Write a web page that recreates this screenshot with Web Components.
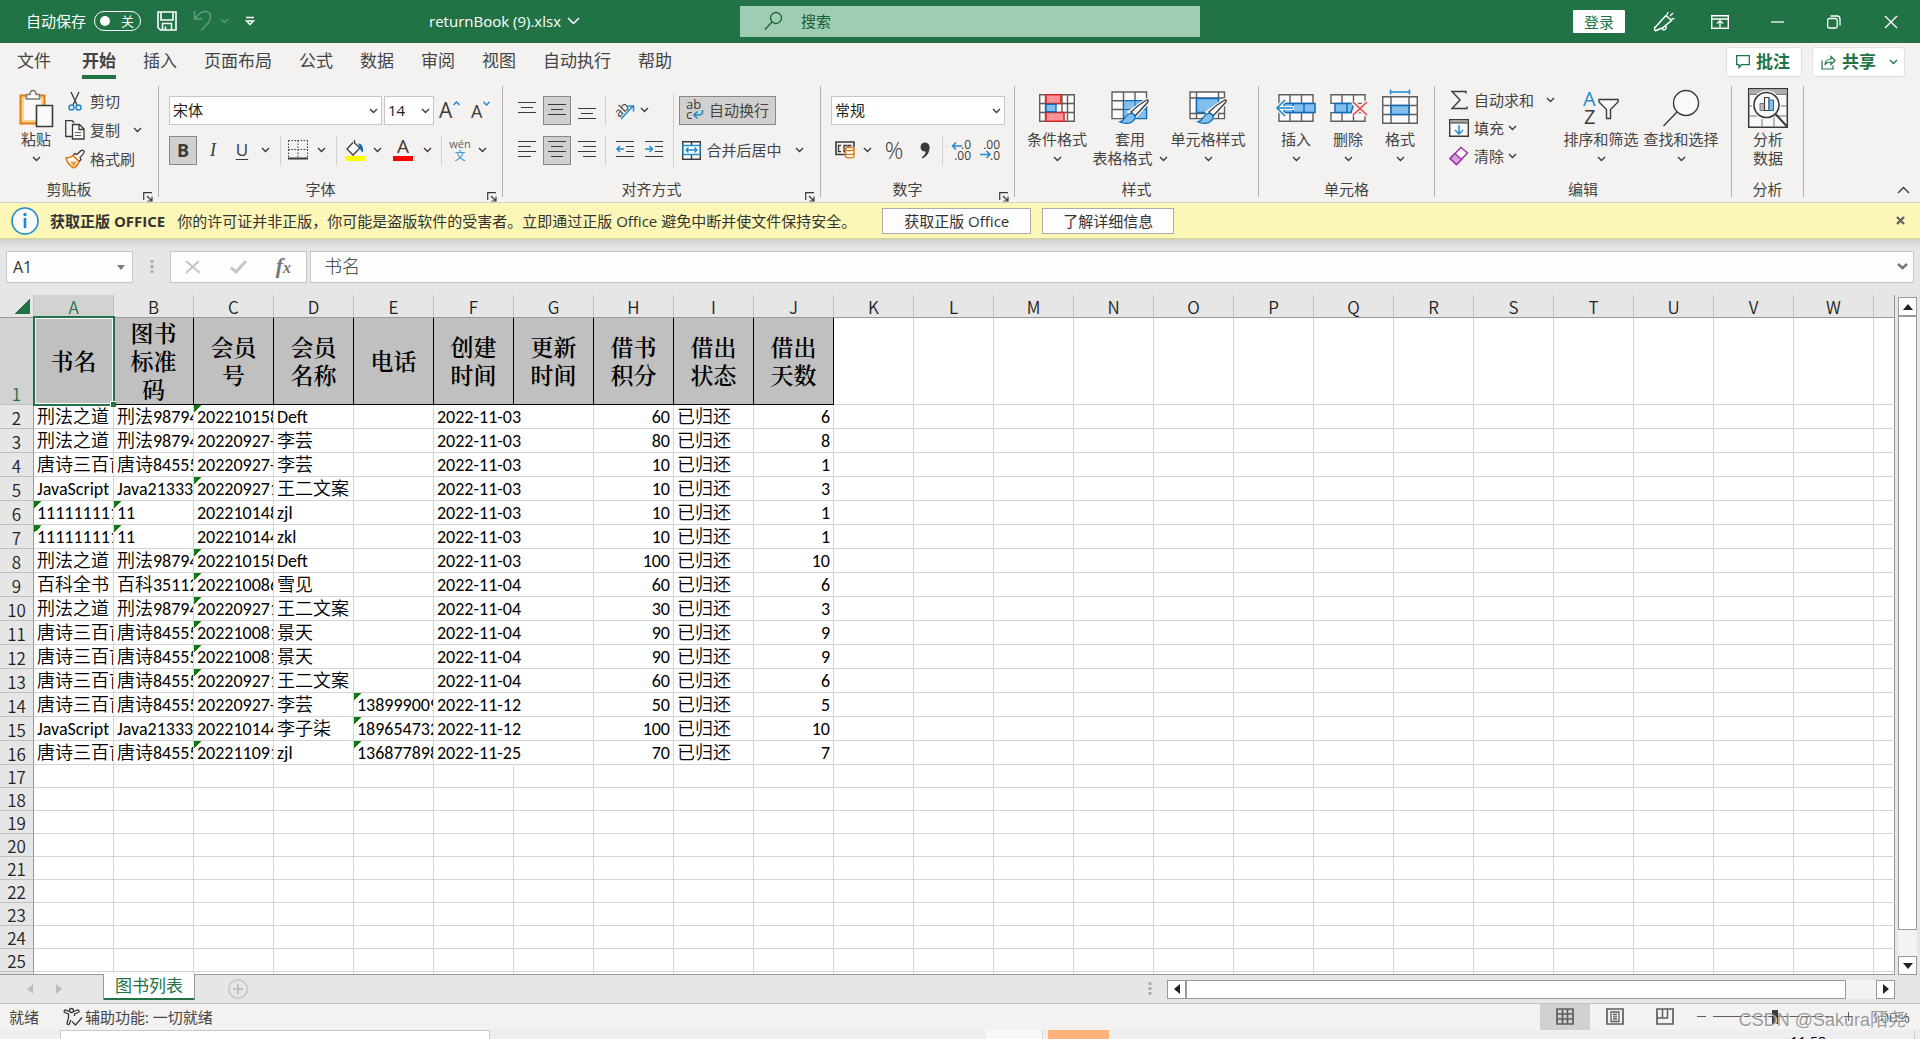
<!DOCTYPE html>
<html lang="zh-CN">
<head>
<meta charset="utf-8">
<title>returnBook (9).xlsx - Excel</title>
<style>
html,body{margin:0;height:100%}
body{font:15px/20px "Open Sans","Noto Sans CJK SC",sans-serif;color:#444;background:#e6e6e6;overflow:hidden}
</style>
</head>
<body>
<excel-app></excel-app>
<script>
const K='#3b3a39', G='#5f5e5c', B='#1e8bcd', D='#0f6cbd', L='#83beec';
const lines=(a)=>a.map(([x,y,w])=>`<path d="M${x} ${y}.5h${w}" stroke="${K}"/>`).join('');
const brush=`<path d="M37 9.500C39 8 40 9.500 38.500 11.500L26 25l-5-4z" fill="#fafafa" stroke="#f3f2f1" stroke-width="4"/><path d="M37 9.500C39 8 40 9.500 38.500 11.500L26 25l-4-4Q29 14 37 9.500z" fill="#fafafa" stroke="${K}" stroke-width="1.300"/><path d="M20 23c4-2 8 2 5 6-3 4-9 4-14 2 5-1 4-6 9-8z" fill="${L}" stroke="${D}" stroke-width="1.300"/>`;
const ICONS={
chev:[9,6,`<path d="M1 1l3.500 3.500L8 1" stroke="${K}" stroke-width="1.400"/>`],
chevw:[13,8,`<path d="M1 1l5.500 5.500L12 1" stroke="#fff" stroke-width="1.500"/>`],
chevdim:[9,6,`<path d="M1 1l3.500 3.500L8 1" stroke="#5f9a7a" stroke-width="1.300"/>`],
chevg:[9,6,`<path d="M1 1l3.500 3.500L8 1" stroke="#217346" stroke-width="1.300"/>`],
chevbold:[11,7,`<path d="M1 1l4.500 4L10 1" stroke="#777" stroke-width="2.500"/>`],
up:[13,8,`<path d="M1 7l5.500-5.500L12 7" stroke="${K}" stroke-width="1.400"/>`],
save:[20,20,`<path d="M1 1h18v18H3.500L1 16.500zM4 1v8h12V1M5.500 19v-6.500h9V19M8.500 19v-3.500" stroke="#fff" stroke-width="1.600"/>`],
undo:[19,21,`<path d="M1.500 1v8h8M1.500 9C6 3 10 1 13.500 1.500c5 1 5 7 2 11L8 20.500" stroke="#5f9a7a" stroke-width="1.600"/>`],
custom:[10,10,`<path d="M1 1.500h8M1.500 5L5 8.500 8.500 5z" stroke="#fff" stroke-width="1.400"/>`],
search:[19,20,`<circle cx="12" cy="7" r="5.500" stroke="#185c37" stroke-width="1.300"/><path d="M8 11L1 18.500" stroke="#185c37" stroke-width="1.300"/>`],
pen:[22,22,`<path d="M2 20L1.500 17 13 4.500l5.500 5L9 17.500c1 1.500 3 2 4 0V15M2 20l7-3" stroke="#fff" stroke-width="1.500"/><path d="M14 4l1-3M17 5l3-3M18.500 8l3-.5" stroke="#fff" stroke-width="1.300"/>`],
ribbonopt:[18,14,`<path d="M.7.700h16.600v12.600H.7zM1 4h16M9 12V6M6 8.500L9 5.800l3 2.700" stroke="#fff" stroke-width="1.400"/>`],
min:[13,2,`<path d="M0 1h13" stroke="#fff" stroke-width="1.300"/>`],
restore:[14,14,`<rect x=".7" y="3.500" width="9.500" height="9.500" rx="1.500" stroke="#fff" stroke-width="1.300"/><path d="M3.500 1H10q3 0 3 3v6.500" stroke="#fff" stroke-width="1.300"/>`],
close:[14,14,`<path d="M1 1l12 12M13 1L1 13" stroke="#fff" stroke-width="1.400"/>`],
x:[9,9,`<path d="M1 1l7 7M8 1L1 8" stroke="#666" stroke-width="2.400"/>`],
comment:[14,14,`<path d="M.7.700h12.600v9H5.500L3 12.500V9.700H.7z" stroke="#217346" stroke-width="1.300"/>`],
share:[15,15,`<path d="M1 5.500V14h11v-3.500M4 10c0-4 3-6 6-6V1.500L14 5.500l-4 4V7C7 7 5 8 4 10z" stroke="#217346" stroke-width="1.200"/>`],
launch:[10,10,`<path d="M.7 8V.7H9M4 4l5 5M9 4.500V9H4.500" stroke="${K}" stroke-width="1.200"/>`],
paste:[36,40,`<path d="M2.500 7.500h24v28h-24z" fill="#fbd28b" stroke="#e07a12" stroke-width="2"/><path d="M6 11h17v21H6z" fill="#fafafa"/><path d="M8.500 11V6.500h3.500C12 1 18 1 18 6.500h3.500V11z" fill="#fafafa" stroke="#7a7a78" stroke-width="1.500"/><path d="M18.500 17.500h16v21h-16z" fill="#fafafa" stroke="${K}" stroke-width="1.600"/>`],
cut:[14,20,`<path d="M3 1l6 13M11 1L5 14" stroke="${K}" stroke-width="1.300"/><circle cx="3.500" cy="16.500" r="2.500" stroke="${B}" stroke-width="1.500"/><circle cx="10.500" cy="16.500" r="2.500" stroke="${B}" stroke-width="1.500"/>`],
copy:[20,20,`<path d="M7 16.500H.7V.7h6.500l2 2" stroke="${K}" stroke-width="1.300"/><path d="M7.500 4.500h7l4.500 4.500v10H7.500zM14 5v4.500h5" fill="#fafafa" stroke="${K}" stroke-width="1.300"/><path d="M10 12.500h6M10 15.500h6" stroke="${G}"/>`],
painter:[20,20,`<path d="M18.500 1.500c-1.500-1-2.500 0-6.500 4l-2-1-2 2 6 6 2-2-1-2c4-4 5-5.500 3.500-7z" fill="#fafafa" stroke="${K}" stroke-width="1.300"/><path d="M8 6.500C6 8.500 4 9 1 9c1 4 4 8 8 10 3-2 4.500-4 5-6.500z" fill="#fff" stroke="#e07a12" stroke-width="1.500"/><path d="M5 13l7-1-3 6z" fill="#f0a04b"/>`],
grow:[20,20,`<text x="-1" y="18" font-size="21" fill="${K}" font-family="Open Sans">A</text><path d="M13.500 5l3-3 3 3" stroke="${B}" stroke-width="1.500"/>`],
shrink:[18,20,`<text x="-1" y="18" font-size="18" fill="${K}" font-family="Open Sans">A</text><path d="M11.500 2l3 3 3-3" stroke="${B}" stroke-width="1.500"/>`],
border:[20,20,`<path d="M.5 .500h19M.5 .500v17M19.500 .500v17M10 .500v17M.5 9.500h19" stroke="${K}" stroke-dasharray="1.500 1.500"/><path d="M0 18.500h20" stroke="${K}" stroke-width="2"/>`],
fill:[20,22,`<path d="M8 3.500L2 10l6 6 7-7-5.500-5V1" fill="#fafafa" stroke="${K}" stroke-width="1.300"/><path d="M13 4.500c4 0 5.500 3 5 9-2-1-3-3-3-5z" fill="${D}"/><path d="M0 17h20v5H0z" fill="#ff0"/>`],
fcolor:[20,22,`<text x="10" y="14" text-anchor="middle" font-size="19" fill="${K}" font-family="Open Sans">A</text><path d="M0 17h20v5H0z" fill="#f00"/>`],
wen:[22,22,`<text x="11" y="9" text-anchor="middle" font-size="11" fill="${G}" font-family="Open Sans">wén</text><text x="11" y="21" text-anchor="middle" font-size="11" fill="${B}" font-family="Noto Sans CJK SC">文</text>`],
at:[18,20,lines([[0,2,18],[3,7,12],[0,12,18]])],
am:[18,20,lines([[0,4,18],[3,9,12],[0,14,18]])],
ab:[18,20,lines([[0,8,18],[3,13,12],[0,18,18]])],
al:[18,20,lines([[0,1,18],[0,6,13],[0,11,18],[0,16,13]])],
ac:[18,20,lines([[0,1,18],[3,6,12],[0,11,18],[3,16,12]])],
ar:[18,20,lines([[0,1,18],[5,6,13],[0,11,18],[5,16,13]])],
orient:[22,22,`<text x="1" y="15" font-size="13" fill="${K}" font-family="Open Sans" transform="rotate(-45 8 12)">ab</text><path d="M7 20L19 7M14 7h5.500v5.500" stroke="${B}" stroke-width="1.500"/>`],
outdent:[18,20,lines([[0,1,18],[10,6,8],[10,11,8],[0,16,18]])+`<path d="M8 9H1.500M4 6L1 9l3 3" stroke="${B}" stroke-width="1.500"/>`],
indent:[18,20,lines([[0,1,18],[10,6,8],[10,11,8],[0,16,18]])+`<path d="M0 9h7M4.500 6l3 3-3 3" stroke="${B}" stroke-width="1.500"/>`],
wrap:[18,20,`<text x="0" y="9" font-size="13" fill="${K}" font-family="Open Sans">ab</text><text x="0" y="19" font-size="13" fill="${K}" font-family="Open Sans">c</text><path d="M16.500 10v2q0 3-4 3H8.500M11.500 11.500L8 15l3.500 3.500" stroke="${B}" stroke-width="1.600"/>`],
merge:[19,19,`<path d="M.7.700h17.600v17.600H.7zM9.500 1v4M9.500 14v4" fill="#fafafa" stroke="${K}" stroke-width="1.400"/><path d="M1 4.500h17v9H1z" fill="#fff" stroke="${B}" stroke-width="1.500"/><path d="M4 9h11M6.500 6.500L4 9l2.500 2.500M12.500 6.500L15 9l-2.500 2.500" stroke="${B}" stroke-width="1.400"/>`],
money:[20,18,`<path d="M10 13.500H1V1h18v5" stroke="${K}" stroke-width="1.600"/><path d="M6 4.500H3.500v6H6M12 4.500H9v6h1.500M13 7V4.500h3.500" stroke="${K}" stroke-width="1.300"/><path d="M10.500 8v7c0 2.500 8.500 2.500 8.500 0V8z" fill="#fff" stroke="#e07a12" stroke-width="1.400"/><ellipse cx="14.700" cy="8" rx="4.200" ry="1.700" fill="#fff" stroke="#e07a12" stroke-width="1.400"/><path d="M10.500 12c0 2 8.500 2 8.500 0" stroke="#e07a12" stroke-width="1.400"/>`],
comma:[10,17,`<circle cx="5" cy="5" r="4.500" fill="${K}"/><path d="M9.500 5c0 6-2.500 9.500-7.500 11.500V15C5 13 6 11 5.500 8z" fill="${K}"/>`],
incdec:[21,20,`<path d="M11 6H1.500M5 2.500L1.500 6 5 9.500" stroke="${B}" stroke-width="1.500"/><text x="20" y="9" text-anchor="end" font-size="12" fill="${K}" font-family="Open Sans">.0</text><text x="20" y="20" text-anchor="end" font-size="12" fill="${K}" font-family="Open Sans">.00</text>`],
decdec:[21,20,`<path d="M0 14.500h10M6.500 11l3.500 3.500L6.500 18" stroke="${B}" stroke-width="1.500"/><text x="20" y="9" text-anchor="end" font-size="12" fill="${K}" font-family="Open Sans">.00</text><text x="20" y="20" text-anchor="end" font-size="12" fill="${K}" font-family="Open Sans">.0</text>`],
cond:[36,28,`<path d="M.7.700h34.600v26.600H.7zM6.500 1v26M28.500 1v26M23 1v26M1 9.500h34M1 18.500h34" fill="#fafafa" stroke="${G}" stroke-width="1.400"/><path d="M7 .800h15v8.700H7zM7 18.500h18v8.700H7z" fill="#ff9197" stroke="#d8261c" stroke-width="1.500"/><path d="M7 10.200h10v7.600H7z" fill="${L}" stroke="${D}" stroke-width="1.400"/>`],
tablefmt:[42,34,`<path d="M3 1h34.500v26.600H3zM14.500 1v26M26 1v26M3 9.700h34M3 18.500h34" fill="#fafafa" stroke="${G}" stroke-width="1.400"/><path d="M14.500 9.700h23v17.800h-23z" fill="${L}" stroke="${D}" stroke-width="1.200"/><path d="M26 10v17M15 18.500h22" stroke="${D}"/>`+brush],
cellstyle:[42,34,`<path d="M3 1h34.500v26.600H3zM9.500 1v26M31.500 1v26M3 7h34M3 22.500h34" fill="#fafafa" stroke="${G}" stroke-width="1.400"/><path d="M9.500 7.500h22v14h-22z" fill="${L}" stroke="${D}" stroke-width="1.400"/>`+brush],
insert:[40,28,`<path d="M3 .700h34v26.600H3zM14 .700v26M25.500 .700v26M3 9.500h34M3 18.500h34" fill="#fafafa" stroke="${G}" stroke-width="1.400"/><path d="M8 9.500h31v9H8zM17 9.500v9M28 9.500v9" fill="${L}" stroke="${D}" stroke-width="1.500"/><path d="M18 14H2M9 6l-8 8 8 8" stroke="#f3f2f1" stroke-width="4"/><path d="M17 14H2M9 6l-8 8 8 8" stroke="${B}" stroke-width="1.600"/>`],
del:[40,28,`<path d="M3 .700h34v26.600H3zM14 .700v26M25.500 .700v26M3 9.500h34M3 18.500h34" fill="#fafafa" stroke="${G}" stroke-width="1.400"/><path d="M0 10h40v8H0z" fill="#f3f2f1"/><path d="M7 9.500h19l-3 9H7zM19 9.500v9" fill="${L}" stroke="${D}" stroke-width="1.500"/><path d="M25 8l14 13M39 8L25 21" stroke="#f3f2f1" stroke-width="5"/><path d="M25 8l14 13M39 8L25 21" stroke="#ef4444" stroke-width="1.600"/>`],
format:[36,40,`<path d="M8.500 4h19M8.500 1.500v5M27.500 1.500v5" stroke="${B}" stroke-width="1.500"/><path d="M.7 8.700h34.600v26.600H.7zM9 9v26M27 9v26M1 17.500h34M1 26.500h34" fill="#fafafa" stroke="${G}" stroke-width="1.400"/><path d="M9 17.500h18v9H9z" fill="${L}" stroke="${D}" stroke-width="1.600"/>`],
sum:[18,20,`<path d="M16 3.500V1.500H2l8 8.500-8 8.500h15v-2" stroke="${K}" stroke-width="1.400"/>`],
filld:[20,18,`<path d="M.7.700h18.600v16.600H.7z" fill="#fafafa" stroke="${K}" stroke-width="1.400"/><path d="M1.400 1.400h17.200v2.600H1.400z" fill="#aaa"/><path d="M1 4h18" stroke="${K}"/><path d="M10 6v8.500M6 11l4 4 4-4" stroke="${B}" stroke-width="1.500"/>`],
clear:[20,20,`<path d="M12 1.500l6.500 5.500L7.500 18.500 1 12.500z" fill="#fff" stroke="#9b35a3" stroke-width="1.500"/><path d="M6 7.500l6.500 6-5 5L1 12.500z" fill="#d9a0de" stroke="#9b35a3" stroke-width="1.400"/>`],
sort:[38,36,`<text x="1" y="16" font-size="20" fill="${B}" font-family="Open Sans">A</text><text x="2" y="34" font-size="20" fill="${K}" font-family="Open Sans">Z</text><path d="M17 9.500h19v2.500l-7.500 7.500v9h-4v-9L17 12z" fill="#fafafa" stroke="${K}" stroke-width="1.400"/>`],
find:[38,38,`<circle cx="24" cy="14" r="12.500" fill="#fafafa" stroke="${K}" stroke-width="1.400"/><path d="M15 23L1.500 37" stroke="${K}" stroke-width="1.400"/>`],
analyze:[40,40,`<path d="M.7.700h38.600v38.600H.7z" fill="#fafafa" stroke="${K}" stroke-width="1.500"/><path d="M1.500 1.500h37v5h-37z" fill="#aeaeae"/><path d="M1 6.500h38M1 18h38M1 28h38M14 28v11M26 7v32" stroke="#777"/><circle cx="18.500" cy="17" r="12.500" fill="#fafafa" stroke="#fafafa" stroke-width="4"/><circle cx="18.500" cy="17" r="12.500" fill="#fafafa" stroke="${K}" stroke-width="1.600"/><path d="M27.500 26L39 38.500" stroke="${K}" stroke-width="2"/><path d="M12 15.500h4.500v7H12z" fill="#bbb" stroke="#777"/><path d="M16.500 9.500h4.500v13h-4.500z" fill="#fff" stroke="${K}" stroke-width="1.200"/><path d="M21 12h4.500v10.500H21z" fill="${L}" stroke="${D}"/>`],
info:[28,28,`<circle cx="14" cy="14" r="13" fill="#fafafa" stroke="${B}" stroke-width="1.600"/><path d="M14 11v10" stroke="${B}" stroke-width="2.600"/><circle cx="14" cy="7.500" r="1.700" fill="${B}"/>`],
cancel:[16,14,`<path d="M1 1l14 12M14 1L1 13" stroke="#c4c4c4" stroke-width="2"/>`],
ok:[17,14,`<path d="M1 7.500L6 12 16 1" stroke="#c4c4c4" stroke-width="3"/>`],
dots:[4,14,`<path d="M.5 0h3v3h-3zM.5 5h3v3h-3zM.5 10h3v3h-3z" fill="#adadad"/>`],
caret:[8,5,`<path d="M0 0h8L4 5z" fill="#777"/>`],
left:[6,10,`<path d="M6 0v10L0 5z" fill="#222"/>`],right:[6,10,`<path d="M0 0v10l6-5z" fill="#222"/>`],
leftd:[6,10,`<path d="M6 0v10L0 5z" fill="#bdbdbd"/>`],rightd:[6,10,`<path d="M0 0v10l6-5z" fill="#bdbdbd"/>`],
upt:[10,6,`<path d="M0 6h10L5 0z" fill="#222"/>`],dnt:[10,6,`<path d="M0 0h10L5 6z" fill="#222"/>`],
plus:[20,20,`<circle cx="10" cy="10" r="9.300" stroke="#c0c0c0" stroke-width="1.300"/><path d="M10 5v10M5 10h10" stroke="#c0c0c0" stroke-width="2"/>`],
access:[20,18,`<circle cx="8.500" cy="2.500" r="2" stroke="${K}" stroke-width="1.300"/><path d="M6 3.500L2.500 2C1 2 .5 4 2 4.500l3.500 1.500v4L4 15c0 2 2 2 2.500.5L8 12M11 3.500L14.500 2c2 0 2 2 .5 2.500L11.500 6v2" stroke="${K}" stroke-width="1.300"/><path d="M9 13.500l3.500 3.500L19 9.500" stroke="${K}" stroke-width="1.300"/>`],
v1:[18,17,`<path d="M1 1h16v15H1zM6.500 1v15M11.500 1v15M1 6h16M1 11h16" stroke="${G}" stroke-width="1.700"/>`],
v2:[18,17,`<path d="M1 1h16v15H1z" stroke="${G}" stroke-width="1.700"/><path d="M5 4h8v9.500H5zM7 6.500h4M7 8.800h4M7 11h4" stroke="${G}" stroke-width="1.300"/>`],
v3:[18,17,`<path d="M1 1h16v15H1z" stroke="${G}" stroke-width="1.700"/><path d="M6.500 1v9M1.500 10H11.500V1" stroke="${G}" stroke-width="1.500"/>`]
};
function define(name,css,html,after){
  customElements.define(name,class extends HTMLElement{
    connectedCallback(){
      if(this.shadowRoot)return;
      const r=this.attachShadow({mode:'open'});
      r.innerHTML=`<style>*{box-sizing:border-box}button{font:inherit;color:inherit;background:none;border:0;padding:0;margin:0}${css}</style>`+(typeof html==='function'?html(this):html);
      if(after)after(r,this);
    }
  });
}
define('o-icon',':host{display:inline-flex;flex:none}svg{display:block;overflow:visible}',el=>{
  const [w,h,m]=ICONS[el.getAttribute('name')];
  return `<svg width="${w}" height="${h}" viewBox="0 0 ${w} ${h}" fill="none" aria-hidden="true">${m}</svg>`;
});
define('tool-button',`:host{display:block;flex:none;height:29px}button{display:flex;align-items:center;justify-content:center;gap:5px;width:100%;height:100%;padding-bottom:1px}
button.on{background:#d2d0ce;border:1px solid #8a8886}`,el=>`<button style="width:${el.getAttribute('w')}px" class="${el.hasAttribute('on')?'on':''}" aria-label="${el.getAttribute('label')||''}">${el.hasAttribute('icon')?`<o-icon name="${el.getAttribute('icon')}"></o-icon>`:''}<slot></slot></button>`);
define('large-button',`:host{display:block;flex:none}button{display:flex;flex-direction:column;align-items:center;width:100%;line-height:19px;white-space:nowrap}.i{height:44px;display:flex;align-items:center}.s{height:19px;display:flex;align-items:center;gap:6px}`,
el=>`<button style="width:${el.getAttribute('w')}px"><span class="i"><o-icon name="${el.getAttribute('icon')}"></o-icon></span><span><slot></slot></span><span class="s"><slot name="second"></slot>${el.hasAttribute('plain')?'':'<o-icon name="chev"></o-icon>'}</span></button>`);
define('combo-box',`:host{display:flex;flex:none;position:relative;height:29px}select{appearance:none;font:inherit;color:#222;width:100%;height:100%;border:1px solid #c8c6c4;border-radius:0;background:#fff;padding:0 3px 2px;outline:0}o-icon{position:absolute;right:4px;top:12px;pointer-events:none}`,
el=>`<select aria-label="${el.getAttribute('label')}"><option>${el.getAttribute('value')}</option></select><o-icon name="chev"></o-icon>`,(r,el)=>{el.style.width=el.getAttribute('w')+'px'});
define('ribbon-group',`:host{display:flex;flex-direction:column;flex:none;height:111px;border-right:1px solid #b3b0ad}.b{flex:1;display:flex;min-height:0}.l{display:flex;height:16px;align-items:center}.l span{flex:1;text-align:center;line-height:16px}.l button{width:20px;padding:5px 5px 0;height:16px}`,
el=>`<div class="b"><slot></slot></div><div class="l"><span>${el.getAttribute('label')}</span>${el.hasAttribute('launch')?'<button aria-label="更多选项"><o-icon name="launch"></o-icon></button>':''}</div>`,(r,el)=>{el.style.width=el.getAttribute('w')+'px'});

define('title-bar',`:host{display:grid;grid-template-columns:1fr 460px 1fr;padding-left:20px;height:43px;background:#217346;color:#fff;align-items:center}
.a,.z{display:flex;align-items:center;height:43px}.a{padding-left:6px;padding-bottom:2px}.t{width:47px;height:20px;border:1px solid #fff;border-radius:10px;margin:0 16px 0 8px;display:flex;align-items:center;justify-content:space-between;padding:0 6px 0 5px;font-size:13px}
.t i{width:10px;height:10px;border-radius:5px;background:#fff}.n{margin:0 160px 0 auto;display:flex;align-items:center;gap:6px}
.s{display:flex;align-items:center;height:31px;margin-bottom:1px;background:#9fcdb3;padding-left:24px;gap:16px}input{border:0;outline:0;background:none;font:inherit;flex:1}input::placeholder{color:#185c37;opacity:1}
.z{justify-content:flex-end;padding-right:22px}.z button{display:flex}.login{background:#fff;color:#217346;width:52px;height:23px;justify-content:center;align-items:center;border-radius:1px}`,
`<div class="a"><span>自动保存</span><button class="t" role="switch" aria-checked="false" aria-label="自动保存"><i></i>关</button><o-icon name="save"></o-icon><o-icon name="undo" style="margin:0 8px 0 16px"></o-icon><o-icon name="chevdim"></o-icon><o-icon name="custom" style="margin-left:16px"></o-icon><div class="n"><span>returnBook (9).xlsx</span><o-icon name="chevw"></o-icon></div></div>
<label class="s"><o-icon name="search"></o-icon><input placeholder="搜索" aria-label="搜索"></label>
<div class="z"><button class="login" style="margin-right:28px">登录</button><button aria-label="笔" style="margin-right:36px"><o-icon name="pen"></o-icon></button><button aria-label="功能区显示选项" style="margin-right:42px"><o-icon name="ribbonopt"></o-icon></button><button aria-label="最小化" style="margin-right:43px"><o-icon name="min"></o-icon></button><button aria-label="还原" style="margin-right:43px"><o-icon name="restore"></o-icon></button><button aria-label="关闭"><o-icon name="close"></o-icon></button></div>`);

define('tab-strip',`:host{display:flex;height:43px;padding:4px 15px 0 17px;align-items:flex-start;font-size:17px;background:#f3f2f1}
nav{display:flex;gap:27px;flex:1}nav button{height:32px;line-height:28px;padding-bottom:4px}nav button:first-child{margin-right:4px}nav .on{font-weight:700;border-bottom:4px solid #217346;padding:0}
.r{display:flex;gap:10px}.r button{display:flex;align-items:center;gap:6px;height:30px;background:#fff;border:1px solid #e1dfdd;border-radius:3px;font-weight:700;color:#217346;padding:0 11px 0 9px}.r button:last-child{padding:0 6px 0 8px}.r o-icon+span+o-icon{margin-left:7px}`,
`<nav><button>文件</button><button class="on">开始</button>${['插入','页面布局','公式','数据','审阅','视图','自动执行','帮助'].map(t=>`<button>${t}</button>`).join('')}</nav><div class="r"><button><o-icon name="comment"></o-icon><span>批注</span></button><button><o-icon name="share"></o-icon><span>共享</span><o-icon name="chevg"></o-icon></button></div>`);

const sp=(w,h)=>`<i class="sep" style="width:${w}px;--h:${h||29}px"></i>`;
const tb=(icon,w,label,x='')=>`<tool-button icon="${icon}" w="${w}" label="${label}" ${x}></tool-button>`;
define('ribbon-bar',`:host{display:flex;height:117px;background:#f3f2f1;border-bottom:1px solid #d2d0ce}
.rows{display:flex;flex-direction:column;gap:11px;padding:10px 0 0 10px}.row{display:flex;align-items:center}
.sep{display:flex;justify-content:center;height:var(--h)}.sep::before{content:"";width:1px;background:#d2d0ce}
.list{display:flex;flex-direction:column}.list button{display:flex;align-items:center;height:var(--r);white-space:nowrap}.list .ic{width:24px;display:flex;justify-content:center;margin-right:3px}
.g{font-size:18px;color:${K}}.end{margin:0 10px 4px auto;align-self:flex-end}`,
`<ribbon-group w="159" label="剪贴板" launch><large-button icon="paste" w="42" style="margin-left:15px">粘贴</large-button>
<div class="list" style="--r:29px;margin-left:6px"><button><span class="ic"><o-icon name="cut"></o-icon></span>剪切</button><button><span class="ic"><o-icon name="copy"></o-icon></span>复制<o-icon name="chev" style="margin-left:13px"></o-icon></button><button><span class="ic"><o-icon name="painter"></o-icon></span>格式刷</button></div></ribbon-group>
<ribbon-group w="344" label="字体" launch><div class="rows"><div class="row"><combo-box w="213" label="字体" value="宋体"></combo-box><combo-box w="50" label="字号" value="14" style="margin-left:2px"></combo-box>${tb('grow',32,'增大字号')}${tb('shrink',30,'减小字号')}</div>
<div class="row"><tool-button w="28" on label="加粗"><b class="g">B</b></tool-button><tool-button w="32" label="倾斜"><i class="g" style="font-family:'Liberation Serif',serif">I</i></tool-button><tool-button w="26" label="下划线"><u class="g" style="font-size:17px;text-underline-offset:3px">U</u></tool-button>${tb('chev',20,'下划线选项')}${sp(10)}${tb('border',26,'边框')}${tb('chev',20,'边框选项')}${sp(10)}${tb('fill',28,'填充颜色')}${tb('chev',16,'填充选项')}${tb('fcolor',36,'字体颜色')}${tb('chev',12,'颜色选项')}${sp(16)}${tb('wen',22,'拼音')}${tb('chev',22,'拼音选项')}</div></div></ribbon-group>
<ribbon-group w="318" label="对齐方式" launch><div class="rows"><div class="row">${tb('at',28,'顶端对齐')}${tb('am',28,'垂直居中','on style="margin:0 2px"')}${tb('ab',28,'底端对齐')}${sp(9)}${tb('orient',29,'方向')}${tb('chev',10,'方向选项')}</div><div class="row">${tb('al',28,'左对齐')}${tb('ac',28,'居中','on style="margin:0 2px"')}${tb('ar',28,'右对齐')}${sp(9)}${tb('outdent',29,'减少缩进')}${tb('indent',30,'增加缩进')}</div></div>
<div style="padding:7px 0 0 2px">${sp(5,74)}</div><div class="rows" style="padding-left:3px"><div class="row"><tool-button icon="wrap" w="97" on>自动换行</tool-button></div><div class="row"><tool-button icon="merge" w="102" style="margin-left:2px">合并后居中</tool-button>${tb('chev',32,'合并选项')}</div></div></ribbon-group>
<ribbon-group w="194" label="数字" launch><div class="rows"><div class="row"><combo-box w="174" label="数字格式" value="常规"></combo-box></div><div class="row">${tb('money',28,'会计数字格式')}${tb('chev',17,'货币选项')}<tool-button w="36" label="百分比"><span style="font-size:23px;font-weight:300;color:${K}">%</span></tool-button>${tb('comma',26,'千位分隔')}${sp(9)}${tb('incdec',28,'增加小数位')}${tb('decdec',30,'减少小数位')}</div></div></ribbon-group>
<ribbon-group w="244" label="样式"><large-button icon="cond" w="66" style="margin-left:9px">条件格式</large-button><large-button icon="tablefmt" w="80">套用<span slot="second">表格格式</span></large-button><large-button icon="cellstyle" w="76">单元格样式</large-button></ribbon-group>
<ribbon-group w="176" label="单元格"><large-button icon="insert" w="52" style="margin-left:11px">插入</large-button><large-button icon="del" w="52">删除</large-button><large-button icon="format" w="52">格式</large-button></ribbon-group>
<ribbon-group w="297" label="编辑"><div class="list" style="--r:28px;margin-left:12px;width:114px"><button><span class="ic"><o-icon name="sum"></o-icon></span>自动求和<o-icon name="chev" style="margin-left:12px"></o-icon></button><button><span class="ic"><o-icon name="filld"></o-icon></span>填充<o-icon name="chev" style="margin-left:4px"></o-icon></button><button><span class="ic"><o-icon name="clear"></o-icon></span>清除<o-icon name="chev" style="margin-left:4px"></o-icon></button></div><large-button icon="sort" w="80">排序和筛选</large-button><large-button icon="find" w="80">查找和选择</large-button></ribbon-group>
<ribbon-group w="72" label="分析"><large-button icon="analyze" plain w="72">分析<span slot="second">数据</span></large-button></ribbon-group>
<button class="end" aria-label="折叠功能区"><o-icon name="up"></o-icon></button>`);

define('message-bar',`:host{display:flex;align-items:center;height:36px;background:#fcf7b6;border-bottom:1px solid #d9d58a;padding:0 15px 0 11px;color:#333}
b{margin:0 12px 0 11px}.btn{background:#fdfdfd;border:1px solid #ababab;height:26px;width:149px}.btn+.btn{width:132px;margin-left:11px}.x{margin-left:auto;display:flex}p{margin:0;width:705px;white-space:nowrap}`,
`<o-icon name="info"></o-icon><b>获取正版 OFFICE</b><p>你的许可证并非正版，你可能是盗版软件的受害者。立即通过正版 Office 避免中断并使文件保持安全。</p><button class="btn">获取正版 Office</button><button class="btn">了解详细信息</button><button class="x" aria-label="关闭"><o-icon name="x"></o-icon></button>`);

define('formula-bar',`:host{display:flex;height:56px;padding:12px 6px 12px;background:linear-gradient(#cfcfcf,#e6e6e6 10px);align-items:stretch}
.bx{background:#fdfdfd;border:1px solid #c6c6c6;display:flex;align-items:center}input{border:0;outline:0;background:none;font:inherit;color:#333;min-width:0;flex:1;padding:0}
.n{width:127px;padding:0 7px 0 6px;font-size:16px}.d{width:37px;display:flex;align-items:center;justify-content:center}.f{width:137px;justify-content:space-between;padding:0 15px 0 14px;margin-right:3px}.f button{display:flex;align-items:center}
.fx{font:italic bold 22px/24px "Liberation Serif",serif;color:#777}.fx small{font-size:16px}.e{flex:1;padding:0 5px 2px 13px;font-size:18px}.e input{font-weight:300}`,
`<div class="bx n"><input value="A1" aria-label="名称框"><o-icon name="caret"></o-icon></div><div class="d"><o-icon name="dots"></o-icon></div><div class="bx f"><button aria-label="取消"><o-icon name="cancel"></o-icon></button><button aria-label="输入"><o-icon name="ok"></o-icon></button><button class="fx"><span>f<small>x</small></span></button></div><div class="bx e"><input value="书名" aria-label="编辑栏"><o-icon name="chevbold"></o-icon></div>`);

const DATA=[['刑法之道','刑法98794','*202210158','Deft','','2022-11-03','60','6'],['刑法之道','刑法98794','20220927-','李芸','','2022-11-03','80','8'],['唐诗三百首','唐诗84555','20220927-','李芸','','2022-11-03','10','1'],['JavaScript','Java21333','*202209271','王二文案','','2022-11-03','10','3'],['*1111111111','*11','202210148','zjl','','2022-11-03','10','1'],['*1111111111','*11','202210144','zkl','','2022-11-03','10','1'],['刑法之道','刑法98794','*202210158','Deft','','2022-11-03','100','10'],['百科全书','百科35112','*202210086','雪见','','2022-11-04','60','6'],['刑法之道','刑法98794','*202209271','王二文案','','2022-11-04','30','3'],['唐诗三百首','唐诗84555','*202210081','景天','','2022-11-04','90','9'],['唐诗三百首','唐诗84555','*202210081','景天','','2022-11-04','90','9'],['唐诗三百首','唐诗84555','*202209271','王二文案','','2022-11-04','60','6'],['唐诗三百首','唐诗84555','20220927-','李芸','*138999009','2022-11-12','50','5'],['JavaScript','Java21333','202210144','李子柒','*189654732','2022-11-12','100','10'],['唐诗三百首','唐诗84555','*202211091','zjl','*136877898','2022-11-25','70','7']];
const HEAD=['书名','图书标准码','会员号','会员名称','电话','创建时间','更新时间','借书积分','借出状态','借出天数'];
define('sheet-grid',`:host{display:flex;flex:1;min-height:0;background:#e6e6e6}.g{flex:1;min-width:0;overflow:hidden;border-bottom:1px solid #999}
table{border-collapse:separate;border-spacing:0;table-layout:fixed;width:100%}col.r{width:34px}col.c{width:80px}
th,td{padding:0;font-weight:400;white-space:nowrap}
thead th{height:23px;background:#e6e6e6;border-bottom:1px solid #999;border-right:1px solid #c0c0c0;font:350 17px/21px "Noto Sans CJK SC",sans-serif;color:#222;vertical-align:bottom}
thead th:last-child,td:last-child{border-right:1px solid #999}tbody th{background:#e6e6e6;border-right:1px solid #999;border-bottom:1px solid #c0c0c0;font:350 17px/21px "Noto Sans CJK SC",sans-serif;color:#222;vertical-align:bottom}
thead th.sel,tbody th.sel{background:#d2d2d2;color:#217346}
thead th:first-child{border-right-color:#c0c0c0}.tri{display:block;width:15px;height:15px;margin:0 3px 3px auto;background:linear-gradient(135deg,transparent 50%,#217346 50%)}
td{background-color:#fff;border-right:1px solid #d4d4d4;border-bottom:1px solid #d4d4d4;color:#000;font-size:18px;font-weight:350;overflow:hidden}
td div{height:23px;line-height:23px;padding:0 3px}td span{font-family:Carlito,Lato,sans-serif;font-size:18px;font-weight:400}
td.n{text-align:right}td.o{overflow:visible;border-right-color:#fff}td.o div{width:90px;position:relative}
td.w{background:linear-gradient(135deg,#107c10 50%,transparent 50%) 0 0/8px 8px no-repeat #fff}
tr.h>*{height:87px}tr.a>*{height:24px}tr.e>*{height:23px}
tr.h td.k{background:#c0c0c0;border-color:#000;text-align:center;white-space:normal;font:600 23px/28px "Noto Serif CJK SC","Songti SC","Noto Sans CJK SC",serif;padding:0 15px}
tr.h td.s{position:relative;overflow:visible}.s::before{content:"";position:absolute;inset:-2px -2px -2px -1px;border:2px solid #217346;box-shadow:inset 0 0 0 1px #fff}.s::after{content:"";position:absolute;right:-3px;bottom:-3px;width:5px;height:5px;background:#217346;border:1px solid #fff;border-width:1px 0 0 1px}
.v{width:25px;padding:2px 3px 0;display:flex;flex-direction:column}.v button{width:19px;height:19px;background:#fff;border:1px solid #999;display:flex;align-items:center;justify-content:center}.v .t{flex:1;background:#fff;border:1px solid #999;margin-bottom:26px}.v{background:linear-gradient(#f3f3f3,#f3f3f3) 3px 2px/19px 100% no-repeat}`,
()=>{
 const L2='ABCDEFGHIJKLMNOPQRSTUVW'.split('');
 const fmt=t=>t.replace(/[\x21-\x7e]+/g,m=>`<span>${m}</span>`);
 const blank=n=>'<td></td>'.repeat(n);
 let h=`<div class="g"><table><colgroup><col class="r">${'<col class="c">'.repeat(23)}<col></colgroup><thead><tr><th><i class="tri"></i></th>${L2.map((c,i)=>`<th class="${i?'':'sel'}">${c}</th>`).join('')}<th></th></tr></thead><tbody><tr class="h"><th class="sel">1</th>${HEAD.map((t,i)=>`<td class="k ${i?'':'s'}">${t}</td>`).join('')}${blank(14)}</tr>`;
 DATA.forEach((d,i)=>{
  const c=[...d.slice(0,6),'',d[6],'已归还',d[7]];
  h+=`<tr class="a"><th>${i+2}</th>${c.map((t,j)=>{const w=t[0]==='*';if(w)t=t.slice(1);return `<td class="${w?'w ':''}${j===7||j===9?'n':j===5?'o':''}"><div>${fmt(t)}</div></td>`}).join('')}${blank(14)}</tr>`;
 });
 for(let i=17;i<=26;i++)h+=`<tr class="e"><th>${i<26?i:''}</th>${blank(24)}</tr>`;
 return h+`</tbody></table></div><div class="v"><button aria-label="向上滚动"><o-icon name="upt"></o-icon></button><div class="t"></div><button aria-label="向下滚动"><o-icon name="dnt"></o-icon></button></div>`;
});

define('sheet-tabs',`:host{display:flex;height:29px;background:#e6e6e6;border-bottom:1px solid #c6c6c6;padding-right:25px;align-items:center}
button{display:flex;align-items:center;justify-content:center}.tab{align-self:flex-start;width:92px;height:26px;margin:-1px 33px 0 41px;padding-bottom:3px;background:#fff;color:#217346;font-size:17px;line-height:20px;border:1px solid #999;border-width:0 1px 0;box-shadow:inset 0 -2px #217346}
.nav{margin-left:27px}.nav+.nav{margin-left:23px}.d{margin:0 15px 0 auto;display:flex}.s{width:728px;display:flex;height:19px;background:#f3f3f3}.s button{width:19px;background:#fff;border:1px solid #999}.s div{flex:1;background:#fff;border:1px solid #999;margin-right:30px}`,
`<button class="nav" aria-label="上一个"><o-icon name="leftd"></o-icon></button><button class="nav" aria-label="下一个"><o-icon name="rightd"></o-icon></button><button class="tab">图书列表</button><button aria-label="新工作表"><o-icon name="plus"></o-icon></button><span class="d"><o-icon name="dots"></o-icon></span><div class="s"><button aria-label="向左滚动"><o-icon name="left"></o-icon></button><div></div><button aria-label="向右滚动"><o-icon name="right"></o-icon></button></div>`);

define('status-bar',`:host{display:flex;align-items:center;height:26px;background:#f3f2f1;padding:0 10px 1px 9px;position:relative}
.a{display:flex;align-items:center;gap:2px;margin-left:24px}.v{display:flex;width:50px;height:26px;align-items:center;justify-content:center}.v.on{background:#d2d0ce}.m{margin-left:auto}
.z{margin-left:7px}input{appearance:none;width:120px;height:14px;margin:0 11px 0 7px;background:linear-gradient(#605e5c,#605e5c) 0 50%/100% 1px no-repeat}input::-webkit-slider-thumb{appearance:none;width:6px;height:14px;background:#3b3a39}
.p{margin-left:19px}.wm{position:absolute;right:14px;top:4px;font:18px/24px "Liberation Sans","Noto Sans CJK SC",sans-serif;color:#8d8d8d;opacity:.850;text-shadow:1px 1px #fff}i{display:block;width:9px;height:1px;background:#605e5c}.pl{position:relative}.pl::after{content:"";position:absolute;left:4px;top:-4px;width:1px;height:9px;background:#605e5c}`,
`<span>就绪</span><span class="a"><o-icon name="access"></o-icon>辅助功能: 一切就绪</span><button class="v on m" aria-label="普通"><o-icon name="v1"></o-icon></button><button class="v" aria-label="页面布局"><o-icon name="v2"></o-icon></button><button class="v" aria-label="分页预览"><o-icon name="v3"></o-icon></button><button class="z" aria-label="缩小"><i></i></button><input type="range" min="0" max="100" value="52" aria-label="缩放"><button aria-label="放大"><i class="pl"></i></button><span class="p">100%</span><span class="wm">CSDN @Sakura陌尧</span>`);

define('desktop-edge',`:host{display:flex;height:9px;background:#eee;overflow:hidden;padding-left:60px;padding-right:5px}.w{width:430px;background:#fff;border:1px solid #c8c8c8;border-bottom:0}.x{width:57px;margin-left:496px;background:#f8f8f8;border-right:1px solid #d8d8d8}.o{width:61px;margin-left:5px;background:#ffb27a}.t{margin-left:auto;margin-right:88px;color:#000;font-size:14px;line-height:24px}.e{border-left:1px solid #ccc}`,
`<div class="w"></div><div class="x"></div><div class="o"></div><span class="t">11:58</span><i class="e"></i>`);

define('excel-app',`:host{display:flex;flex-direction:column;height:100vh;overflow:hidden}`,`<title-bar></title-bar><tab-strip></tab-strip><ribbon-bar></ribbon-bar><message-bar></message-bar><formula-bar></formula-bar><sheet-grid></sheet-grid><sheet-tabs></sheet-tabs><status-bar></status-bar><desktop-edge></desktop-edge>`);
</script>
</body>
</html>
